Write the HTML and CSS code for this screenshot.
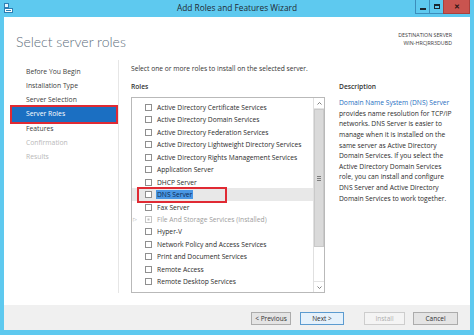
FILE: index.html
```html
<!DOCTYPE html>
<html lang="en">
  <head>
    <meta charset="UTF-8" />
    <title>Add Roles and Features Wizard</title>
    <link rel="stylesheet" href="styles.css">
  </head>
  <body>
    <div class="window">
      <div class="titlebar">
        <svg class="app-icon" width="9" height="10" viewBox="0 0 9 10">
          <rect x="0.5" y="0.5" width="4" height="4" fill="#e8f6fd" stroke="#2f7fb3" stroke-width="1" />
          <rect x="0.5" y="5.5" width="8" height="4" fill="#ffffff" stroke="#2f7fb3" stroke-width="1" />
          <rect x="2" y="7" width="5" height="1" fill="#2f7fb3" />
        </svg>
        <div class="title">Add Roles and Features Wizard</div>
        <div class="controls">
          <span class="ctl"><span class="min-glyph"></span></span>
          <span class="ctl"><span class="max-glyph"></span></span>
          <span class="ctl close">&#x2715;</span>
        </div>
      </div>

      <div class="client">
        <div class="header">
          <h1>Select server roles</h1>
          <div class="dest">
            <div>DESTINATION SERVER</div>
            <div>WIN-HRCJRR3DUBD</div>
          </div>
        </div>

        <div class="main">
          <nav class="steps">
            <div class="step">Before You Begin</div>
            <div class="step">Installation Type</div>
            <div class="step">Server Selection</div>
            <div class="step active">Server Roles</div>
            <div class="step">Features</div>
            <div class="step disabled">Confirmation</div>
            <div class="step disabled">Results</div>
          </nav>

          <div class="content">
            <p class="intro">Select one or more roles to install on the selected server.</p>
            <div class="cols">
              <div class="roles-col">
                <h2>Roles</h2>
                <div class="listbox">
                  <div class="rows">
                    <div class="row"><span class="exp"></span><span class="check"></span>Active Directory Certificate Services</div>
                    <div class="row"><span class="exp"></span><span class="check"></span>Active Directory Domain Services</div>
                    <div class="row"><span class="exp"></span><span class="check"></span>Active Directory Federation Services</div>
                    <div class="row"><span class="exp"></span><span class="check"></span>Active Directory Lightweight Directory Services</div>
                    <div class="row"><span class="exp"></span><span class="check"></span>Active Directory Rights Management Services</div>
                    <div class="row"><span class="exp"></span><span class="check"></span>Application Server</div>
                    <div class="row"><span class="exp"></span><span class="check"></span>DHCP Server</div>
                    <div class="row selected">
                      <span class="exp"></span><span class="check"></span><span class="sel-text">DNS Server</span>
                      <span class="callout"></span>
                    </div>
                    <div class="row"><span class="exp"></span><span class="check"></span>Fax Server</div>
                    <div class="row installed"><span class="exp">&#x25B7;</span><span class="check filled"></span>File And Storage Services (Installed)</div>
                    <div class="row"><span class="exp"></span><span class="check"></span>Hyper-V</div>
                    <div class="row"><span class="exp"></span><span class="check"></span>Network Policy and Access Services</div>
                    <div class="row"><span class="exp"></span><span class="check"></span>Print and Document Services</div>
                    <div class="row"><span class="exp"></span><span class="check"></span>Remote Access</div>
                    <div class="row"><span class="exp"></span><span class="check"></span>Remote Desktop Services</div>
                  </div>
                  <div class="scrollbar">
                    <div class="sb-btn">
                      <svg width="5" height="3" viewBox="0 0 5 3"><path d="M0.5 2.5 L2.5 0.5 L4.5 2.5" fill="none" stroke="#606060" stroke-width="0.8" /></svg>
                    </div>
                    <div class="sb-thumb"><span class="grip"></span></div>
                    <div class="sb-track"></div>
                    <div class="sb-btn">
                      <svg width="5" height="3" viewBox="0 0 5 3"><path d="M0.5 0.5 L2.5 2.5 L4.5 0.5" fill="none" stroke="#606060" stroke-width="0.8" /></svg>
                    </div>
                  </div>
                </div>
              </div>

              <div class="desc-col">
                <h2>Description</h2>
                <p><span class="link">Domain Name System (DNS) Server</span> provides name resolution for TCP/IP networks. DNS Server is easier to manage when it is installed on the same server as Active Directory Domain Services. If you select the Active Directory Domain Services role, you can install and configure DNS Server and Active Directory Domain Services to work together.</p>
              </div>
            </div>
          </div>
        </div>

        <div class="footer">
          <button class="btn prev">&lt; Previous</button>
          <button class="btn next">Next &gt;</button>
          <button class="btn install" disabled>Install</button>
          <button class="btn cancel">Cancel</button>
        </div>
      </div>
    </div>
  </body>
</html>
```

FILE: styles.css
```css
* {
  margin: 0;
  padding: 0;
  box-sizing: border-box;
}

body {
  font-family: "Open Sans", "Noto Sans", sans-serif;
  background: #5ec9ef;
  width: 474px;
  height: 335px;
  overflow: hidden;
}

.window {
  width: 474px;
  height: 335px;
  display: flex;
  flex-direction: column;
  background: #5ec9ef;
}

/* title bar */

.titlebar {
  height: 17px;
  display: flex;
  align-items: flex-start;
  position: relative;
}

.app-icon {
  margin: 3px 0 0 4px;
}

.title {
  position: absolute;
  left: 0;
  right: 0;
  top: 2px;
  text-align: center;
  font-size: 8.3px;
  color: #1e2a33;
  pointer-events: none;
}

.controls {
  margin-left: auto;
  margin-right: 4px;
  display: flex;
}

.ctl {
  width: 15px;
  height: 14px;
  border: 1px solid #3c8dbb;
  border-top: none;
  margin-left: -1px;
  display: flex;
  align-items: center;
  justify-content: center;
}

.min-glyph {
  width: 6px;
  height: 2px;
  background: #1b2730;
  margin-top: 4px;
}

.max-glyph {
  width: 6px;
  height: 5px;
  border: 1px solid #1b2730;
  border-top-width: 2px;
}

.ctl.close {
  width: 27px;
  background: #c9544f;
  border-color: #a8403c;
  color: #2a1414;
  font-size: 7px;
  font-weight: bold;
}

/* client area */

.client {
  flex: 1;
  margin: 0 4px 5px;
  background: #ffffff;
  display: flex;
  flex-direction: column;
}

.header {
  height: 43px;
  display: flex;
  justify-content: space-between;
  padding: 0 18px 0 12px;
}

.header h1 {
  font-family: Lato, "Open Sans", sans-serif;
  font-weight: 300;
  font-size: 14px;
  color: #5d6e7c;
  margin-top: 16px;
}

.dest {
  margin-top: 14px;
  text-align: right;
  font-size: 5.3px;
  line-height: 8.3px;
  color: #3a3a3a;
}

.main {
  height: 233px;
  display: flex;
  margin-bottom: 12px;
}

/* step list */

.steps {
  width: 115px;
  border-right: 1px solid #e6e6e6;
  padding-top: 4.5px;
}

.step {
  height: 14.3px;
  line-height: 14.3px;
  margin-left: 8px;
  width: 104px;
  padding-left: 14px;
  font-size: 6.8px;
  color: #404040;
}

.step.active {
  background: #1b6fc2;
  color: #ffffff;
  outline: 2px solid #e02a33;
}

.step.disabled {
  color: #b8b8b8;
}

/* content */

.content {
  flex: 1;
  padding: 4px 0 0 12px;
}

.intro {
  font-size: 6.7px;
  line-height: 10px;
  color: #333333;
}

.cols {
  display: flex;
  gap: 14px;
  margin-top: 8.3px;
}

.cols h2 {
  font-size: 6.7px;
  line-height: 10px;
  font-weight: 600;
  color: #333333;
}

.roles-col {
  width: 194px;
}

.listbox {
  margin-top: 5px;
  height: 196px;
  border: 1px solid #b9b9b9;
  display: flex;
}

.rows {
  flex: 1;
  padding-top: 3px;
}

.row {
  height: 12.45px;
  display: flex;
  align-items: center;
  font-size: 6.7px;
  color: #2b2b2b;
  position: relative;
  white-space: nowrap;
}

.exp {
  width: 13px;
  padding-left: 1px;
  font-size: 5px;
  color: #9a9a9a;
}

.check {
  width: 7px;
  height: 7px;
  border: 1px solid #8f8f8f;
  background: #ffffff;
  margin-right: 5px;
  flex-shrink: 0;
}

.check.filled {
  border-color: #c4c4c4;
  box-shadow: inset 0 0 0 1.5px #ffffff, inset 0 0 0 4px #bdbdbd;
}

.row.installed {
  color: #9d9d9d;
}

.row.selected {
  background: #e8e8e8;
}

.sel-text {
  background: #4a97e4;
  color: #0d2a52;
  padding: 0 1px;
  margin-left: -1px;
}

.callout {
  position: absolute;
  left: 5px;
  top: -1.5px;
  width: 90px;
  height: 16px;
  border: 2px solid #e02a33;
}

.scrollbar {
  width: 11px;
  border-left: 1px solid #e0e0e0;
  display: flex;
  flex-direction: column;
}

.sb-btn {
  height: 11px;
  display: flex;
  align-items: center;
  justify-content: center;
  border-bottom: 1px solid #e4e4e4;
}

.sb-btn:last-child {
  border-bottom: none;
  border-top: 1px solid #e4e4e4;
}

.sb-thumb {
  height: 138px;
  background: #dadada;
  border: 1px solid #c9c9c9;
  display: flex;
  align-items: center;
  justify-content: center;
}

.grip {
  width: 4px;
  height: 5px;
  background: repeating-linear-gradient(#7d7d7d 0 1px, #dadada 1px 2px);
}

.sb-track {
  flex: 1;
  background: #ffffff;
}

/* description */

.desc-col {
  width: 116px;
}

.desc-col p {
  margin-top: 6px;
  font-size: 6.7px;
  line-height: 10.6px;
  color: #2b2b2b;
}

.link {
  color: #1f6fbf;
}

/* footer */

.footer {
  flex: 1;
  background: #f0f0f0;
  display: flex;
  align-items: flex-start;
  padding: 7px 12px 0 0;
  justify-content: flex-end;
}

.btn {
  height: 13px;
  font-family: "Open Sans", "Noto Sans", sans-serif;
  font-size: 6.5px;
  color: #303030;
  background: #e4e4e4;
  border: 1px solid #acacac;
}

.btn.prev {
  width: 40px;
}

.btn.next {
  width: 44px;
  margin-left: 9px;
  background: #e5f1fb;
  border-color: #5b9bd0;
}

.btn.install {
  width: 41px;
  margin-left: 20px;
  background: #f4f4f4;
  border-color: #cdcdcd;
  color: #adadad;
}

.btn.cancel {
  width: 45px;
  margin-left: 8px;
}
```
